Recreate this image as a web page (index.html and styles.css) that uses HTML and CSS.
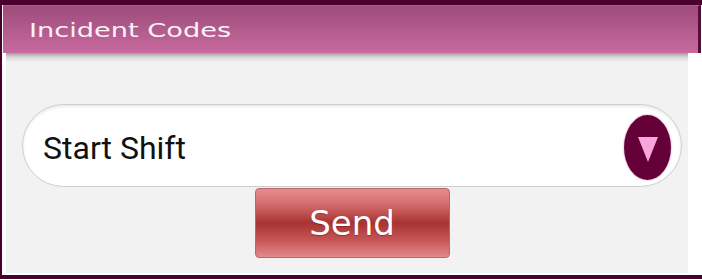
FILE: index.html
```html
<!DOCTYPE html>
<html lang="en">
<head>
<meta charset="UTF-8" />
<meta name="viewport" content="width=device-width, initial-scale=1" />
<title>Incident Codes</title>
<link rel="stylesheet" href="styles.css">
</head>
<body>
<div class="screen">
    <div class="titlebar">
        <span class="title">Incident Codes</span>
    </div>
    <div class="panel">
        <div class="picker">
            <span class="picker-value">Start Shift</span>
            <span class="picker-arrow"><span class="arrow-tri"></span></span>
        </div>
        <button class="send" type="button">Send</button>
    </div>
</div>
</body>
</html>
```

FILE: styles.css
```css
    * {
        box-sizing: border-box;
    }
    html, body {
        margin: 0;
        height: 100%;
        overflow: hidden;
    }
    body {
        background: #4a002e;
        font-family: "DejaVu Sans", Verdana, sans-serif;
    }
    .screen {
        margin: 5px 0 0 2px;
        height: 270px;
        background: #fff;
        display: flex;
        flex-direction: column;
    }
    .titlebar {
        height: 48px;
        width: 698px;
        margin-left: 1px;
        padding: 1px 0 0 26px;
        display: flex;
        align-items: center;
        border-top: 1px solid #b25c8c;
        border-right: 3px solid #5a0a3c;
        background: linear-gradient(#9e4c7c 0%, #ad5889 40%, #c86a9f 100%);
    }
    .title {
        display: inline-block;
        color: #fbf2f7;
        font-size: 20px;
        transform: scaleX(1.36);
        transform-origin: left center;
    }
    .panel {
        flex: 1;
        margin: 0 14px 2px 4px;
        padding: 51px 6px 0 16px;
        background: linear-gradient(#9f9f9f 0, #d6d6d6 4px, #f2f2f2 9px);
        display: flex;
        flex-direction: column;
    }
    .picker {
        height: 83px;
        border: 1px solid #cdcdcd;
        border-radius: 42px;
        background: #fff;
        box-shadow: inset 0 2px 3px rgba(0, 0, 0, 0.08);
        display: flex;
        align-items: center;
        justify-content: space-between;
        padding: 5px 10px 0 20px;
    }
    .picker-value {
        font-family: Roboto, "Noto Sans", sans-serif;
        font-size: 32px;
        color: #111;
    }
    .picker-arrow {
        width: 47px;
        height: 65px;
        margin-top: -1px;
        border-radius: 50%;
        background: radial-gradient(ellipse at center, #600036 0%, #660039 70%, #7a1448 88%, #b04a78 100%);
        box-shadow: 0 0 2px rgba(180, 70, 120, 0.7);
        display: flex;
        align-items: center;
        justify-content: center;
    }
    .arrow-tri {
        width: 0;
        height: 0;
        margin-top: 3px;
        border-left: 10.5px solid transparent;
        border-right: 10.5px solid transparent;
        border-top: 25px solid #f7a5dc;
    }
    .send {
        width: 195px;
        height: 70px;
        margin: 1px auto 0;
        border: 1px solid #b8656e;
        border-radius: 4px;
        background: linear-gradient(#e48d8c 0%, #d46e6d 22%, #a83331 50%, #c65757 76%, #e28b8a 100%);
        color: #fff;
        font-family: "DejaVu Sans", Verdana, sans-serif;
        font-size: 34px;
        text-shadow: 0 1px 1px rgba(90, 0, 0, 0.35);
        padding: 0;
        cursor: pointer;
    }
```
